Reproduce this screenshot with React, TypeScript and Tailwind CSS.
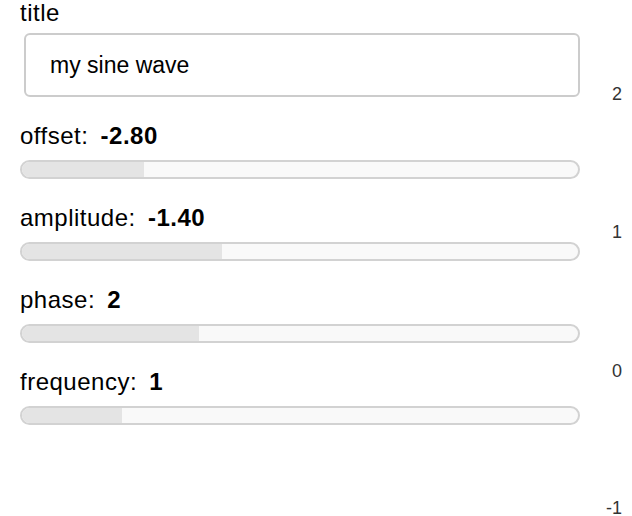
import React from 'react';

type Control = {
  name: string;
  value: string;
  fill: number; // filled part of the track, px
};

const controls: Control[] = [
  { name: 'offset', value: '-2.80', fill: 122 },
  { name: 'amplitude', value: '-1.40', fill: 200 },
  { name: 'phase', value: '2', fill: 177 },
  { name: 'frequency', value: '1', fill: 100 },
];

const ticks = ['2', '1', '0', '-1'];

const Slider: React.FC<Control> = ({ name, value, fill }) => (
  <div className="pt-[26px]">
    <div className="h-[26px] text-[24px] leading-[26px] tracking-[0.5px] text-black whitespace-nowrap">
      {name}: <span className="font-bold ml-[5px]">{value}</span>
    </div>
    <div className="mt-[11px] h-[19px] w-[560px] rounded-full border-2 border-[#d2d2d2] bg-[#f9f9f9] overflow-hidden">
      <div className="h-full bg-[#e4e4e4]" style={{ width: fill }} />
    </div>
  </div>
);

export default function App() {
  return (
    <div
      className="flex w-[632px] h-[516px] overflow-hidden bg-white"
      style={{ fontFamily: '"Liberation Sans", Arial, sans-serif' }}
    >
      {/* controls */}
      <div className="w-[580px] shrink-0 pl-5">
        <div className="h-[26px] text-[24px] leading-[26px] tracking-[0.5px] text-black">title</div>
        <div className="mt-[7px] ml-1 flex h-[64px] w-[556px] items-center rounded-md border-2 border-[#cccccc] pl-[24px] text-[23px] text-black">
          my sine wave
        </div>
        {controls.map((c) => (
          <Slider key={c.name} {...c} />
        ))}
      </div>

      {/* y axis of the plot */}
      <div className="flex-1 pr-[10px] pt-[84px] text-right text-[18px] leading-5 text-[#333333]">
        <div className="h-[138px]">{ticks[0]}</div>
        <div className="h-[139px]">{ticks[1]}</div>
        <div className="h-[137px]">{ticks[2]}</div>
        <div>{ticks[3]}</div>
      </div>
    </div>
  );
}
